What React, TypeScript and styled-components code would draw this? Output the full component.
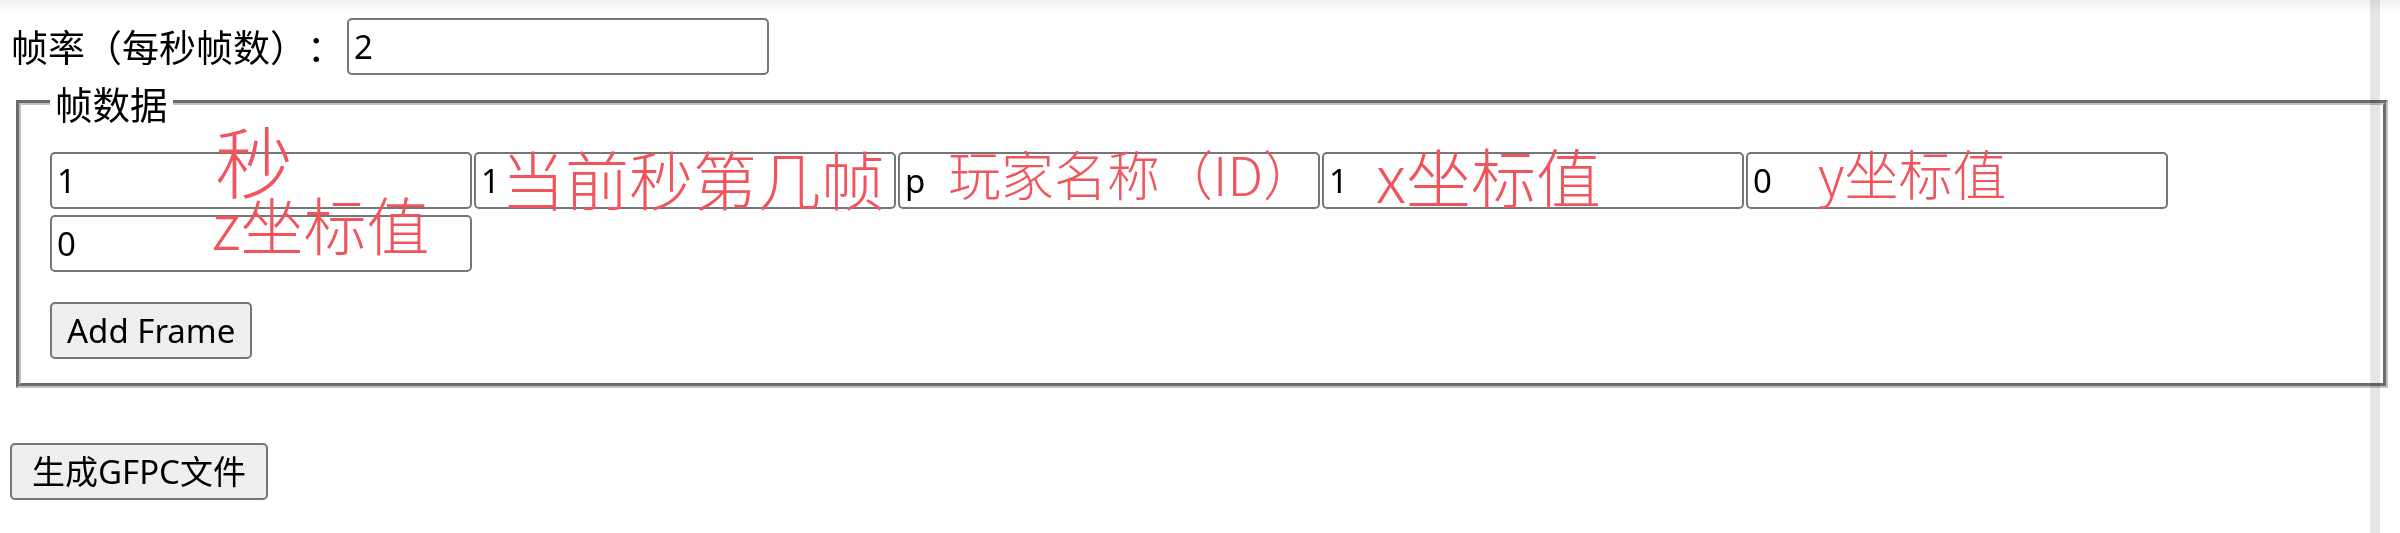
import React from 'react';
import styled, { createGlobalStyle } from 'styled-components';

const GlobalStyle = createGlobalStyle`
  html, body {
    margin: 0;
    padding: 0;
    background: #fff;
  }

  body {
    font-family: "Noto Sans", "Noto Sans CJK SC", sans-serif;
    color: #000;
    text-spacing-trim: space-all;
  }
`;

const Page = styled.main`
  position: relative;
  box-sizing: border-box;
  min-height: 533px;
  padding: 18px 7px 0 11px;
`;

const TopShade = styled.div`
  position: fixed;
  top: 0;
  left: 0;
  right: 0;
  height: 12px;
  background: linear-gradient(#efefef, rgba(255, 255, 255, 0));
  pointer-events: none;
`;

const ScrollTrack = styled.div`
  position: fixed;
  top: 0;
  bottom: 0;
  left: 2370px;
  width: 10px;
  background: rgba(0, 0, 0, 0.1);
  pointer-events: none;
`;

const RateRow = styled.div`
  display: flex;
  align-items: center;
`;

const RateLabel = styled.label`
  font-family: "Noto Sans CJK SC", sans-serif;
  font-size: 37px;
  line-height: 1.45;
  white-space: nowrap;
  text-spacing-trim: space-all;
  margin-right: 3px;
`;

const TextInput = styled.input`
  box-sizing: border-box;
  width: 421.5px;
  height: 57px;
  margin: 0;
  padding: 0 5px;
  border: 2px solid #767676;
  border-radius: 5px;
  background: #fff;
  color: #000;
  font-family: "Noto Sans", sans-serif;
  font-size: 33px;
  outline: none;
`;

const FrameSet = styled.fieldset`
  margin: 0.5px 5px 0;
  padding: 22.5px 29px 24px;
  border: 5px groove #c0c0c0;
  min-width: 0;
`;

const Legend = styled.legend`
  padding: 0 5px;
  font-family: "Noto Sans CJK SC", sans-serif;
  font-size: 37.5px;
  line-height: 54px;
`;

const FieldGrid = styled.div`
  display: flex;
  flex-wrap: wrap;
  column-gap: 2.5px;
  row-gap: 6px;
`;

const Field = styled.div`
  position: relative;
  display: flex;
`;

const Note = styled.span<{ $x: number; $y: number; $size: number }>`
  position: absolute;
  left: ${p => p.$x}px;
  top: ${p => p.$y}px;
  font-family: "Noto Sans CJK SC", sans-serif;
  font-weight: 300;
  font-size: ${p => p.$size}px;
  line-height: 1;
  color: #f0555e;
  white-space: nowrap;
  text-spacing-trim: space-all;
  pointer-events: none;
`;

const Button = styled.button<{ $pad?: number }>`
  display: block;
  box-sizing: border-box;
  width: fit-content;
  height: 57px;
  padding: 0 ${p => p.$pad ?? 15}px;
  border: 2px solid #767676;
  border-radius: 5px;
  background: #efefef;
  color: #000;
  font-family: "Noto Sans", "Noto Sans CJK SC", sans-serif;
  font-size: 33px;
  line-height: 1;
`;

const AddFrameButton = styled(Button)`
  margin-top: 30px;
`;

const GenerateButton = styled(Button)`
  margin-top: 55px;
  margin-left: -1px;
`;

const frameFields = [
  { value: '1', note: '秒', x: 165, y: -32, size: 78 },
  { value: '1', note: '当前秒第几帧', x: 27, y: -7, size: 64 },
  { value: 'p', note: '玩家名称（ID）', x: 50, y: -5, size: 53 },
  { value: '1', note: 'x坐标值', x: 54, y: -9, size: 65 },
  { value: '0', note: 'y坐标值', x: 72, y: -6, size: 54 },
  { value: '0', note: 'z坐标值', x: 162, y: -24, size: 63 },
];

export default function App() {
  return (
    <>
      <GlobalStyle />
      <TopShade />
      <Page>
        <RateRow>
          <RateLabel htmlFor="fps">帧率（每秒帧数）：</RateLabel>
          <TextInput id="fps" type="text" defaultValue="2" />
        </RateRow>

        <FrameSet>
          <Legend>帧数据</Legend>
          <FieldGrid>
            {frameFields.map((f, i) => (
              <Field key={i}>
                <TextInput type="text" defaultValue={f.value} />
                <Note $x={f.x} $y={f.y} $size={f.size}>{f.note}</Note>
              </Field>
            ))}
          </FieldGrid>
          <AddFrameButton type="button">Add Frame</AddFrameButton>
        </FrameSet>

        <GenerateButton type="button" $pad={20}>生成GFPC文件</GenerateButton>
      </Page>
      <ScrollTrack />
    </>
  );
}
